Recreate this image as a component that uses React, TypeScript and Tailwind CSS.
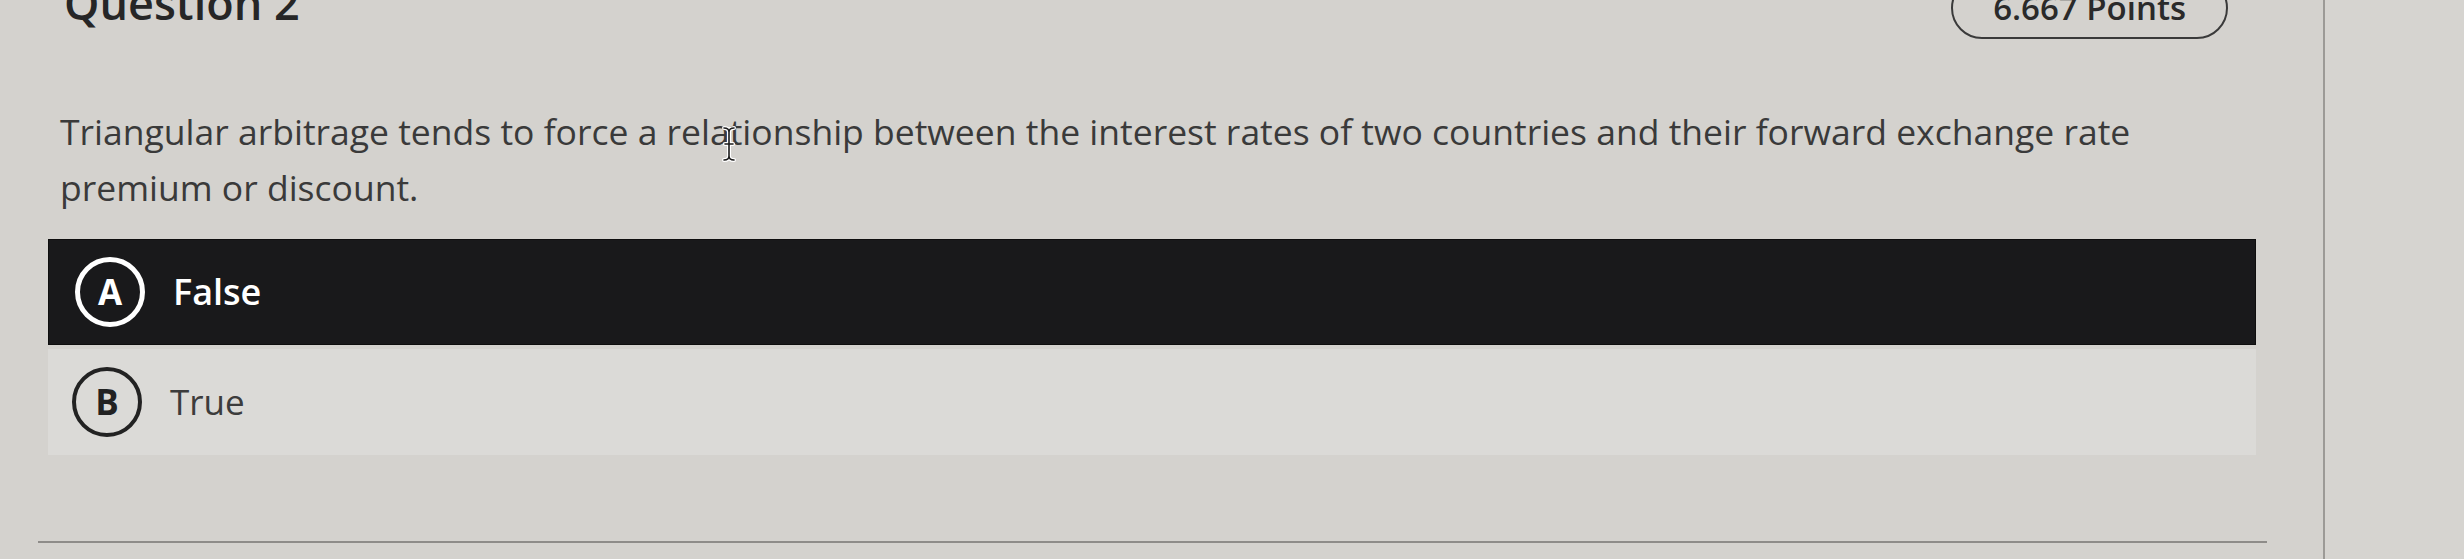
import React from 'react';

const options = [
  { key: 'A', label: 'False', selected: true },
  { key: 'B', label: 'True', selected: false },
];

function TextCursor() {
  return (
    <svg width="16" height="36" viewBox="0 0 16 36" className="absolute left-[721px] top-[23px]">
      <path d="M3 2 Q8 2 8 6 Q8 2 13 2 M8 6 V30 M3 34 Q8 34 8 30 Q8 34 13 34 M4 18 H12" fill="none" stroke="#fff" strokeWidth="4" strokeLinecap="round" />
      <path d="M3 2 Q8 2 8 6 Q8 2 13 2 M8 6 V30 M3 34 Q8 34 8 30 Q8 34 13 34 M4 18 H12" fill="none" stroke="#1b1b1b" strokeWidth="1.6" strokeLinecap="round" />
    </svg>
  );
}

export default function App() {
  return (
    <div className="w-[2464px] h-[559px] overflow-hidden flex bg-[#d4d2ce] font-['Open_Sans',sans-serif]">
      <section className="w-[2325px] shrink-0 border-r-2 border-[#9c9a96] flex flex-col">
        <header className="-mt-[23px] flex items-start justify-between pl-[64px] pr-[95px]">
          <h1 className="mt-[3px] text-[45px] leading-none font-semibold text-[#262626]">Question 2</h1>
          <span className="h-[62px] px-[40px] flex items-center rounded-full border-2 border-[#3a3a3a] text-[33px] font-semibold text-[#2a2a2a]">
            6.667 Points
          </span>
        </header>

        <div className="relative mt-[64px] pl-[60px] pr-[160px]">
          <p className="text-[35.5px] leading-[56px] text-[#3a3a3a]">
            Triangular arbitrage tends to force a relationship between the interest rates of two countries and their forward exchange rate premium or discount.
          </p>
          <TextCursor />
        </div>

        <ul className="mt-[24px] ml-[48px] w-[2208px] flex flex-col gap-[4px]">
          {options.map((o) => (
            <li
              key={o.key}
              className={
                o.selected
                  ? 'h-[106px] flex items-center gap-[28px] pl-[26px] bg-[#19191b] border border-[#0e0e0e]'
                  : 'h-[106px] flex items-center gap-[28px] pl-[24px] bg-[#dbdad7]'
              }
            >
              <span
                className={
                  o.selected
                    ? 'w-[70px] h-[70px] rounded-full border-[5px] border-white flex items-center justify-center text-[35px] font-bold text-white'
                    : 'w-[70px] h-[70px] rounded-full border-4 border-[#222] flex items-center justify-center text-[35px] font-bold text-[#222]'
                }
              >
                {o.key}
              </span>
              <span
                className={
                  o.selected
                    ? 'text-[36px] font-semibold text-white'
                    : 'text-[35px] text-[#3c3c3c]'
                }
              >
                {o.label}
              </span>
            </li>
          ))}
        </ul>

        <hr className="mt-[86px] ml-[38px] w-[2229px] border-t-2 border-[#8e8c89]" />
      </section>
      <aside className="flex-1 bg-[#d6d4d0]" />
    </div>
  );
}
